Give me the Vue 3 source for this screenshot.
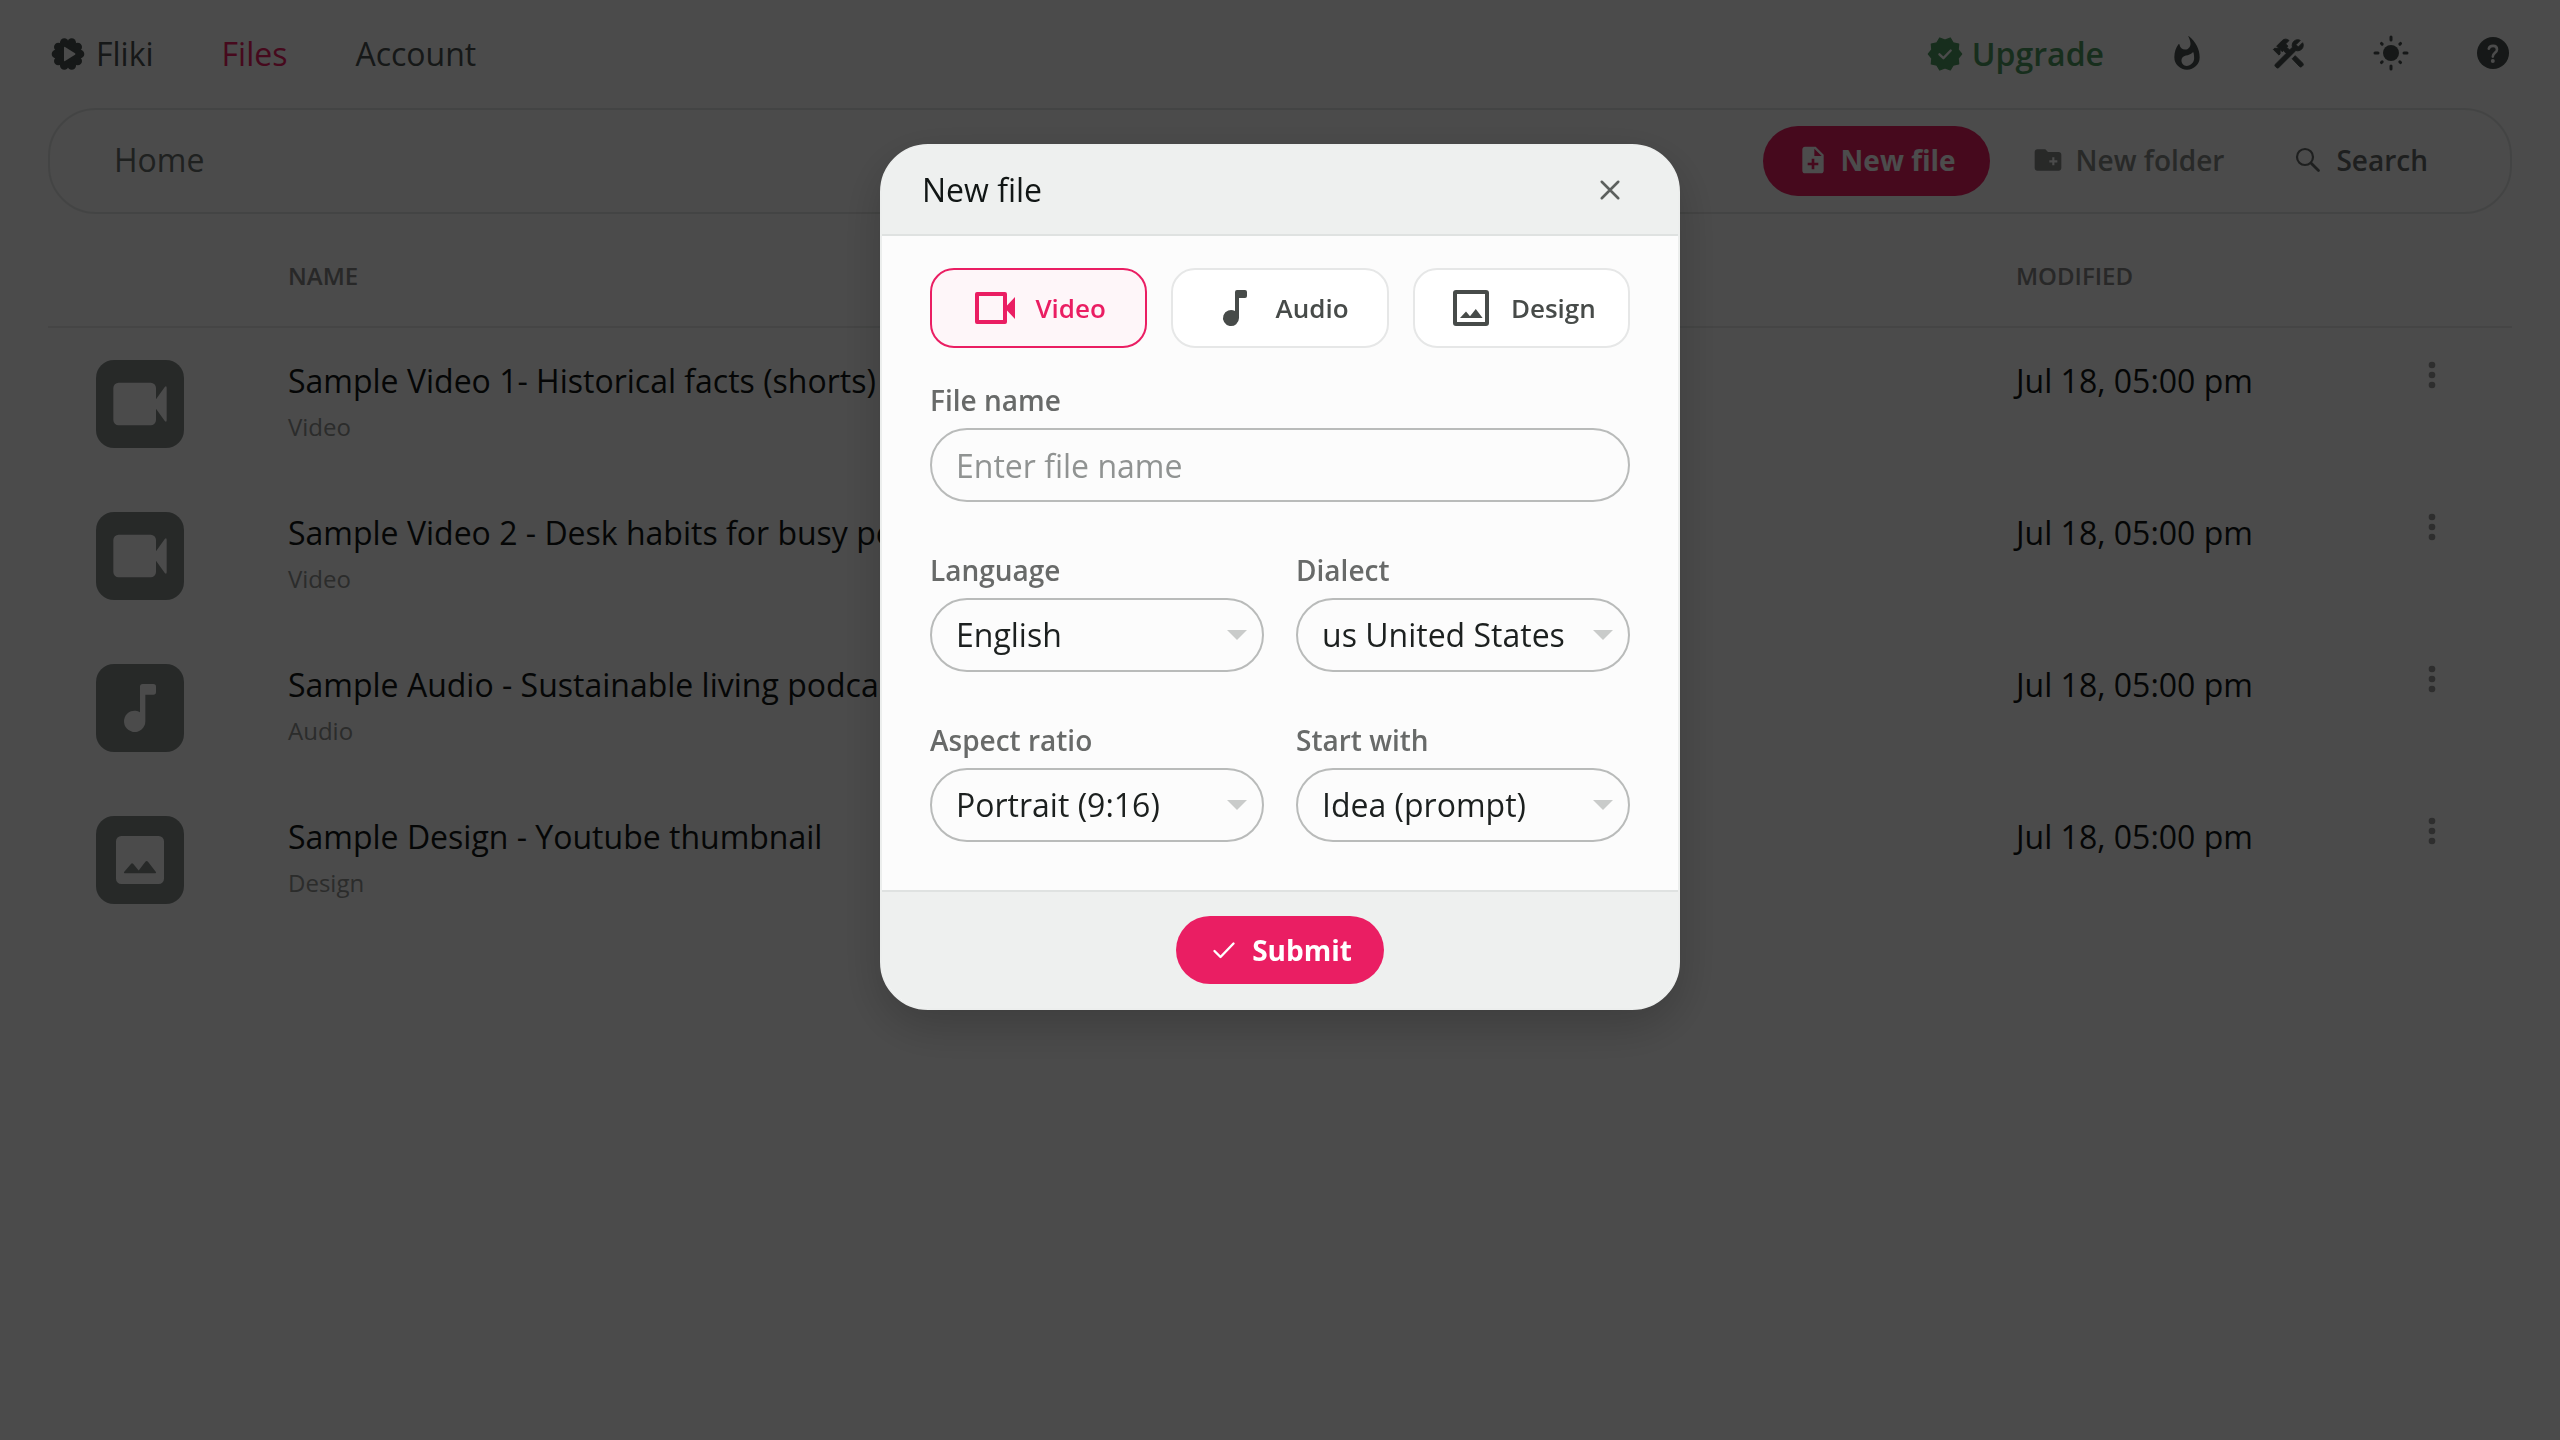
<script setup>
import { ref } from 'vue'

const files = [
  { title: 'Sample Video 1- Historical facts (shorts)', type: 'Video', modified: 'Jul 18, 05:00 pm' },
  { title: 'Sample Video 2 - Desk habits for busy people', type: 'Video', modified: 'Jul 18, 05:00 pm' },
  { title: 'Sample Audio - Sustainable living podcast', type: 'Audio', modified: 'Jul 18, 05:00 pm' },
  { title: 'Sample Design - Youtube thumbnail', type: 'Design', modified: 'Jul 18, 05:00 pm' }
]

const fileIcons = {
  Video: 'M4 4h12a2 2 0 0 1 2 2v4.2L21.3 5.6Q22 5 22 6v12q0 1-.7.4L18 13.8V18a2 2 0 0 1-2 2H4a2 2 0 0 1-2-2V6a2 2 0 0 1 2-2z',
  Audio: 'M12 4v9.55A4 4 0 1 0 14 17V7h3a1 1 0 0 0 1-1V4a1 1 0 0 0-1-1h-4a1 1 0 0 0-1 1z',
  Design: 'M5 3h14a2 2 0 0 1 2 2v14a2 2 0 0 1-2 2H5a2 2 0 0 1-2-2V5a2 2 0 0 1 2-2zM6.3 17h11.4q.6 0 .2-.6l-2.900-3.700q-.5-.6-1 0L11.500 15.900 9.500 13.500q-.5-.5-.9 0L6.100 16.400q-.4.6.2.6z'
}

const tabIcons = {
  Video: 'M3 4h14a1 1 0 0 1 1 1v5.800L22 6.500v11L18 13.200V19a1 1 0 0 1-1 1H3a1 1 0 0 1-1-1V5a1 1 0 0 1 1-1zM4 6v12h12V6z',
  Audio: fileIcons.Audio,
  Design: 'M4.500 3h15A1.500 1.500 0 0 1 21 4.500v15a1.500 1.500 0 0 1-1.500 1.500h-15A1.500 1.500 0 0 1 3 19.500v-15A1.500 1.500 0 0 1 4.500 3zM5 5v14h14V5zM6.500 17h11.300l-3.400-4.500-2.900 3.600-2-2.400z'
}

const kinds = ['Video', 'Audio', 'Design']
const kind = ref('Video')
const fileName = ref('')

const selects = [
  { id: 'language', label: 'Language', value: 'English' },
  { id: 'dialect', label: 'Dialect', value: 'us United States' },
  { id: 'ratio', label: 'Aspect ratio', value: 'Portrait (9:16)' },
  { id: 'start', label: 'Start with', value: 'Idea (prompt)' }
]

const petals = Array.from({ length: 10 }, (_, i) => {
  const a = (i * Math.PI) / 5
  return { x: 20 + 12 * Math.cos(a), y: 19 + 12 * Math.sin(a) }
})
const rays = [0, 45, 90, 135, 180, 225, 270, 315]
</script>

<template>
  <div class="page">
    <header class="topbar">
      <nav class="links">
        <a href="#" class="brand">
          <svg class="nav-icon" viewBox="0 0 38 38" aria-hidden="true">
            <circle cx="20" cy="19" r="13" />
            <circle v-for="(p, i) in petals" :key="i" :cx="p.x" :cy="p.y" r="4.3" />
            <path class="cut" d="M16 12.500q0-1.200 1-.600l10 6.300q1 .8 0 1.500l-10 6.300q-1 .6-1-.6z" />
          </svg>
          Fliki
        </a>
        <a href="#" class="current">Files</a>
        <a href="#">Account</a>
      </nav>
      <div class="tools">
        <a href="#" class="upgrade">
          <svg class="nav-icon" viewBox="0 0 24 24" aria-hidden="true">
            <path stroke="currentColor" stroke-width=".8" stroke-linejoin="round" d="M22.500 12l-2.200-2.790.34-3.500-3.500-.82-1.800-3L12 3.200 8.660 1.900 6.860 4.890 3.360 5.700l.34 3.500L1.500 12l2.200 2.790-.34 3.500 3.500.82 1.800 3L12 20.800l3.340 1.290 1.800-3 3.500-.82-.34-3.500z" />
            <path class="cut-line" d="M8.500 12.200l2.500 2.400 4.600-4.800" />
          </svg>
          Upgrade
        </a>
        <button type="button" class="icon-button" aria-label="Trending">
          <svg class="nav-icon" viewBox="0 0 24 24"><path d="M13 1.200q-.5-.8.4-.3C17.400 4.200 20 8.800 20 14a8 8 0 0 1-16 0c0-3.200 1-6 2.600-8.100q.5-.6.700.2c.3 1.800 1.700 3.100 3.500 3.100 2.100 0 3.400-1.700 3.400-3.700 0-1.700-.6-3-1.200-4.300zM11.710 19.500c2.650 0 4.800-2.150 4.800-4.800 0-1.300-.1-2.500-.4-3.600q-.2-.5-.6-.1c-1.100 1.100-2.700 1.700-4.210 2-1.760.36-2.810 1.500-2.810 3.120 0 1.740 1.440 3.380 3.220 3.380z" /></svg>
        </button>
        <button type="button" class="icon-button" aria-label="Tools">
          <svg class="nav-icon" viewBox="0 0 24 24" stroke="currentColor" stroke-width=".6" stroke-linejoin="round">
            <path d="M14 15l1.900-1.950 4.700 4.700q.8.8.2 1.500l-.7.700q-.8.600-1.500-.1z" />
            <path d="M17.500 10c1.930 0 3.500-1.570 3.500-3.500 0-.58-.16-1.120-.41-1.600l-2.700 2.700-1.490-1.490 2.700-2.700c-.48-.25-1.020-.41-1.600-.41C15.570 3 14 4.570 14 6.500c0 .41.080.8.210 1.160l-1.850 1.850-1.780-1.780.71-.71-1.410-1.410L12 3.490c-1.170-1.170-3.070-1.170-4.240 0L4.220 7.030l1.410 1.410H2.810l-.71.71 3.540 3.540.71-.71V9.150l1.410 1.410.71-.71 1.780 1.780-6.810 6.810q-.7.8 0 1.500l.6.6q.8.700 1.500 0L16.340 9.790c.36.13.75.21 1.160.21z" />
          </svg>
        </button>
        <button type="button" class="icon-button" aria-label="Theme">
          <svg class="nav-icon" viewBox="0 0 38 38" stroke="currentColor" stroke-width="3" stroke-linecap="round">
            <circle cx="19" cy="18" r="8" stroke="none" />
            <line v-for="r in rays" :key="r" x1="19" :y1="r % 90 ? 4.500 : 2" x2="19" :y2="r % 90 ? 5.500 : 5" :transform="`rotate(${r} 19 18)`" />
          </svg>
        </button>
        <button type="button" class="icon-button" aria-label="Help">
          <svg class="nav-icon" viewBox="0 0 38 38">
            <circle cx="19" cy="18" r="16" />
            <path class="cut-line wide" d="M14.800 13.800C15.500 10 23 9.600 23 14.400c0 3.300-4.200 3.600-4.200 7.200" />
            <circle class="cut" cx="18.800" cy="26" r="2" />
          </svg>
        </button>
      </div>
    </header>

    <main>
      <section class="toolbar">
        <a href="#" class="crumb">Home</a>
        <div class="actions">
          <button type="button" class="pill primary">
            <svg class="pill-icon" viewBox="0 0 24 24" aria-hidden="true"><path d="M14 2H6c-1.100 0-2 .9-2 2v16c0 1.100.9 2 2 2h12c1.100 0 2-.9 2-2V8zm2 14h-3v3h-2v-3H8v-2h3v-3h2v3h3zm-3-7V3.500L18.500 9z" /></svg>
            New file
          </button>
          <button type="button" class="pill folder">
            <svg class="pill-icon" viewBox="0 0 24 24" aria-hidden="true"><path d="M20 6h-8l-2-2H4c-1.110 0-2 .89-2 2v12c0 1.110.89 2 2 2h16c1.110 0 2-.89 2-2V8c0-1.110-.89-2-2-2zm-1 7.800h-2.200V16h-1.600v-2.200H13v-1.600h2.200V10h1.600v2.200H19z" /></svg>
            New folder
          </button>
          <button type="button" class="pill search">
            <svg class="pill-icon" viewBox="0 0 32 32" fill="none" stroke="currentColor" stroke-linecap="round" aria-hidden="true">
              <circle cx="13" cy="13" r="8" stroke-width="2.200" /><path d="M19.200 19.200l7.300 7.300" stroke-width="2.800" />
            </svg>
            Search
          </button>
        </div>
      </section>

      <table class="files">
        <colgroup><col class="c-icon" /><col /><col class="c-date" /><col class="c-menu" /></colgroup>
        <thead>
          <tr><th></th><th>NAME</th><th>MODIFIED</th><th></th></tr>
        </thead>
        <tbody>
          <tr v-for="file in files" :key="file.title">
            <td class="tile-cell">
              <span class="tile">
                <svg viewBox="0 0 24 24" fill-rule="evenodd" aria-hidden="true"><path :d="fileIcons[file.type]" /></svg>
              </span>
            </td>
            <td><div class="title">{{ file.title }}</div><div class="type">{{ file.type }}</div></td>
            <td>{{ file.modified }}</td>
            <td class="menu-cell">
              <button type="button" class="icon-button kebab" aria-label="More">
                <svg viewBox="0 0 8 28"><circle cx="4" cy="4" r="3.300" /><circle cx="4" cy="14" r="3.300" /><circle cx="4" cy="24" r="3.300" /></svg>
              </button>
            </td>
          </tr>
        </tbody>
      </table>
    </main>

    <div class="backdrop">
      <form class="dialog" role="dialog" aria-labelledby="dialog-title" @submit.prevent>
        <div class="dialog-head">
          <h2 id="dialog-title">New file</h2>
          <button type="button" class="icon-button close" aria-label="Close">
            <svg viewBox="0 0 24 24" fill="none" stroke="currentColor" stroke-width="2.800" stroke-linecap="round"><path d="M3 3l18 18M21 3L3 21" /></svg>
          </button>
        </div>
        <div class="dialog-body">
          <div class="tabs">
            <button v-for="k in kinds" :key="k" type="button" class="tab" :class="{ active: k === kind }" @click="kind = k">
              <svg viewBox="0 0 24 24" fill-rule="evenodd" aria-hidden="true"><path :d="tabIcons[k]" /></svg>
              {{ k }}
            </button>
          </div>
          <div class="field">
            <label for="file-name">File name</label>
            <input id="file-name" v-model="fileName" class="control" type="text" placeholder="Enter file name" />
          </div>
          <div class="pair">
            <div v-for="s in selects" :key="s.id" class="field">
              <label :for="s.id">{{ s.label }}</label>
              <div class="select">
                <select :id="s.id" class="control"><option>{{ s.value }}</option></select>
                <svg viewBox="0 0 20 10" aria-hidden="true"><path d="M0 0h20L10 10z" /></svg>
              </div>
            </div>
          </div>
        </div>
        <div class="dialog-foot">
          <button type="submit" class="pill submit">
            <svg class="pill-icon" viewBox="0 0 32 32" fill="none" stroke="currentColor" stroke-width="2.400" stroke-linecap="round" stroke-linejoin="round" aria-hidden="true"><path d="M6.500 17l6 6L25.500 9.500" /></svg>
            Submit
          </button>
        </div>
      </form>
    </div>
  </div>
</template>

<style>
body {
  background: #fafafa;
}
</style>

<style scoped>
.page {
  --page: #fafafa;
  --pink: #ea1e63;
  --ink: #4a5250;
  min-height: 100vh;
  background: var(--page);
  color: #111615;
  font-family: "Open Sans", "Noto Sans", sans-serif;
  font-size: 32px;
  line-height: 48px;
}
.page *, .page { box-sizing: border-box; }
svg { display: block; fill: currentColor; flex: none; }
svg[fill="none"] { fill: none; }
a { color: inherit; text-decoration: none; }
button { font: inherit; color: inherit; background: none; border: 0; padding: 0; cursor: pointer; }

.topbar {
  display: flex;
  justify-content: space-between;
  align-items: center;
  height: 108px;
  padding: 0 48px;
  color: var(--ink);
}
.links, .tools, .brand, .upgrade, .actions { display: flex; align-items: center; }
.links { gap: 68px; }
.tools { gap: 64px; }
.brand { gap: 10px; }
.upgrade { gap: 8px; }
.current { color: var(--pink); }
.upgrade { color: #4f9b61; font-weight: 600; }
.nav-icon { width: 38px; height: 38px; }
.cut { fill: var(--page); }
.cut-line { fill: none; stroke: var(--page); stroke-width: 1.500; stroke-linecap: round; stroke-linejoin: round; }
.wide { stroke-width: 2.600; }
.icon-button { display: block; }

main { padding: 0 48px; }
.toolbar {
  display: flex;
  justify-content: space-between;
  align-items: center;
  height: 106px;
  padding: 0 48px 0 64px;
  border: 2px solid #e2e4e3;
  border-radius: 48px;
}
.crumb { padding-bottom: 2px; color: #686e6c; }
.pill {
  display: flex;
  align-items: center;
  gap: 12px;
  height: 70px;
  padding: 0 34px 2px;
  border-radius: 35px;
  font-size: 28px;
  font-weight: 600;
}
.pill-icon { width: 32px; height: 32px; }
.primary { margin-right: 8px; background: var(--pink); color: #fff; font-weight: 700; }
.folder { color: #858a88; }
.search { color: #656a68; }

.files { width: 100%; margin-top: 22px; border-collapse: separate; border-spacing: 0; table-layout: fixed; }
.c-icon { width: 240px; }
.c-date { width: 336px; }
.c-menu { width: 160px; }
th {
  padding: 22px 0 32px;
  border-bottom: 2px solid #e6e8e7;
  color: #868686;
  font-size: 24px;
  font-weight: 600;
  line-height: 36px;
  text-align: left;
}
td { height: 152px; padding: 29px 0 0; vertical-align: top; white-space: nowrap; }
.tile-cell { padding: 32px 0 0 48px; }
.tile {
  display: flex;
  align-items: center;
  justify-content: center;
  width: 88px;
  height: 88px;
  border-radius: 18px;
  background: #838a88;
  color: var(--page);
}
.tile svg { width: 64px; height: 64px; }
.type { color: #909392; font-size: 24px; line-height: 44px; }
.menu-cell { padding-top: 33px; }
.kebab { margin: 0 auto; color: #999; }
.kebab svg { width: 8px; height: 28px; }

.backdrop {
  position: fixed;
  inset: 0;
  display: flex;
  justify-content: center;
  align-items: flex-start;
  padding-top: 144px;
  background: rgba(0, 0, 0, 0.7);
}
.dialog {
  width: 800px;
  border: 2px solid #eceeed;
  border-radius: 48px;
  overflow: hidden;
  background: #fcfcfc;
  box-shadow: 0 16px 48px rgba(0, 0, 0, 0.2);
}
.dialog-head {
  display: flex;
  justify-content: space-between;
  align-items: center;
  height: 90px;
  padding: 0 57px 0 40px;
  border-bottom: 2px solid #dfe2e1;
  background: #eef0ef;
}
h2 { margin: 0; font-size: 32px; font-weight: 400; line-height: 48px; }
.close { color: #5c605e; }
.close svg { width: 22px; height: 22px; }
.dialog-body { padding: 32px 48px 48px; }
.tabs { display: grid; grid-template-columns: repeat(3, 1fr); gap: 24px; margin-bottom: 32px; }
.tab {
  display: flex;
  justify-content: center;
  align-items: center;
  gap: 16px;
  height: 80px;
  border: 2px solid #e6e7e7;
  border-radius: 24px;
  background: #fff;
  color: #474b49;
  font-size: 26px;
  font-weight: 600;
}
.tab.active { border-color: var(--pink); background: #fef6f9; color: var(--pink); }
.tab svg { width: 48px; height: 48px; }
.field { display: flex; flex-direction: column; gap: 8px; margin-bottom: 48px; }
.field label { color: #686a69; font-size: 28px; font-weight: 600; line-height: 40px; }
.pair { display: grid; grid-template-columns: 1fr 1fr; column-gap: 32px; row-gap: 48px; }
.pair .field { margin-bottom: 0; }
.control {
  width: 100%;
  height: 74px;
  margin: 0;
  padding: 0 24px;
  border: 2px solid #b9bbba;
  border-radius: 37px;
  background: transparent;
  color: #1c201f;
  font: inherit;
  appearance: none;
  outline: none;
}
.control::placeholder { color: #909392; opacity: 1; }
.select { display: grid; align-items: center; }
.select > * { grid-area: 1 / 1; }
.select svg { width: 20px; height: 10px; margin-right: 17px; justify-self: end; color: #c9cbca; pointer-events: none; }
.dialog-foot {
  display: flex;
  justify-content: center;
  padding: 24px;
  border-top: 2px solid #dfe2e1;
  background: #eef0ef;
}
.submit { height: 68px; padding: 0 32px; background: var(--pink); color: #fff; font-weight: 700; }
</style>
